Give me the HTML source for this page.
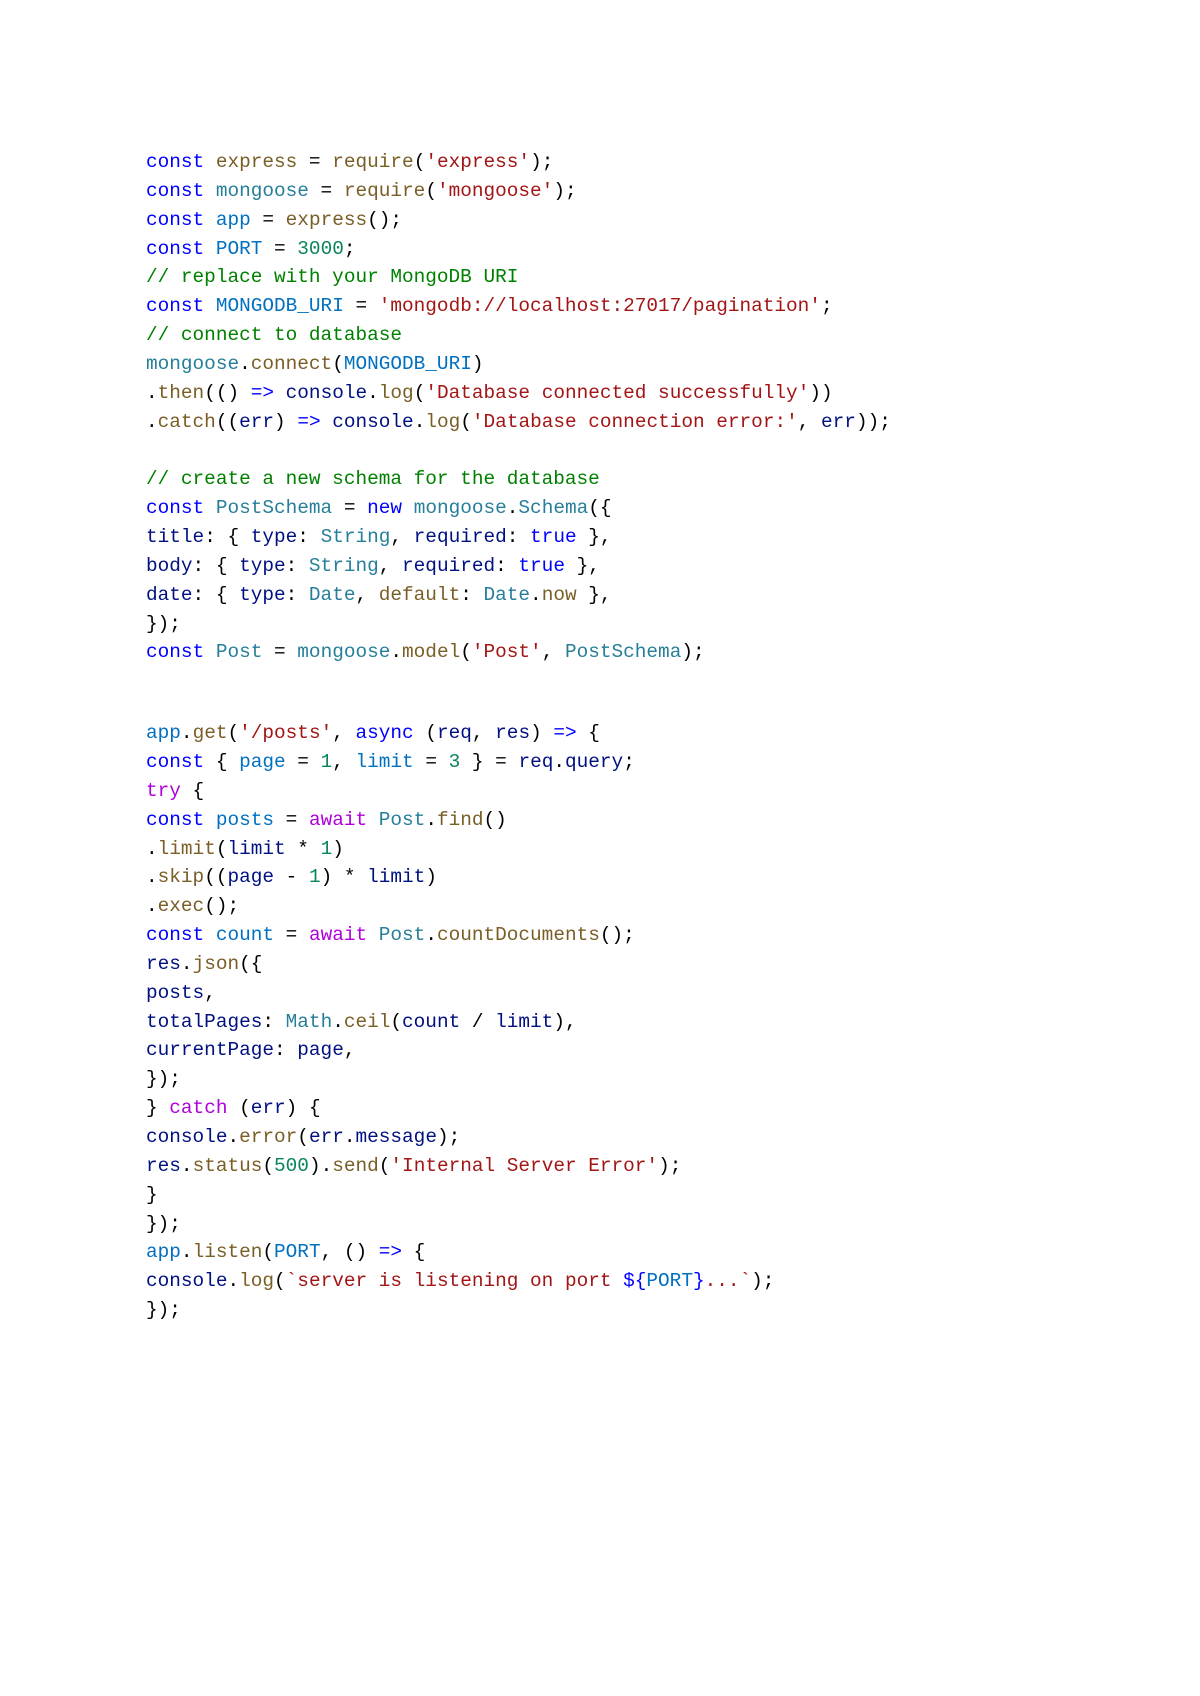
<!DOCTYPE html>
<html><head><meta charset="utf-8"><style>
body{margin:0;background:#fff;width:1200px;height:1696px;overflow:hidden}
pre{position:absolute;left:146px;top:148px;margin:0;font-family:"Liberation Mono",monospace;font-size:19.4px;line-height:28.85px;color:#000;letter-spacing:0}
.g{display:inline-block;height:52px;vertical-align:top}
.k{color:#0000ff}.t{color:#267f99}.v{color:#0070c1}.f{color:#795e26}.s{color:#a31515}.n{color:#098658}.c{color:#008000}.p{color:#af00db}.d{color:#001080}
</style></head><body><pre><span class="k">const</span> <span class="f">express</span> = <span class="f">require</span>(<span class="s">'express'</span>);
<span class="k">const</span> <span class="t">mongoose</span> = <span class="f">require</span>(<span class="s">'mongoose'</span>);
<span class="k">const</span> <span class="v">app</span> = <span class="f">express</span>();
<span class="k">const</span> <span class="v">PORT</span> = <span class="n">3000</span>;
<span class="c">// replace with your MongoDB URI</span>
<span class="k">const</span> <span class="v">MONGODB_URI</span> = <span class="s">'mongodb://localhost:27017/pagination'</span>;
<span class="c">// connect to database</span>
<span class="t">mongoose</span>.<span class="f">connect</span>(<span class="v">MONGODB_URI</span>)
.<span class="f">then</span>(() <span class="k">=&gt;</span> <span class="d">console</span>.<span class="f">log</span>(<span class="s">'Database connected successfully'</span>))
.<span class="f">catch</span>((<span class="d">err</span>) <span class="k">=&gt;</span> <span class="d">console</span>.<span class="f">log</span>(<span class="s">'Database connection error:'</span>, <span class="d">err</span>));

<span class="c">// create a new schema for the database</span>
<span class="k">const</span> <span class="t">PostSchema</span> = <span class="k">new</span> <span class="t">mongoose</span>.<span class="t">Schema</span>({
<span class="d">title</span>: { <span class="d">type</span>: <span class="t">String</span>, <span class="d">required</span>: <span class="k">true</span> },
<span class="d">body</span>: { <span class="d">type</span>: <span class="t">String</span>, <span class="d">required</span>: <span class="k">true</span> },
<span class="d">date</span>: { <span class="d">type</span>: <span class="t">Date</span>, <span class="f">default</span>: <span class="t">Date</span>.<span class="f">now</span> },
});
<span class="k">const</span> <span class="t">Post</span> = <span class="t">mongoose</span>.<span class="f">model</span>(<span class="s">'Post'</span>, <span class="t">PostSchema</span>);
<span class="g"></span>
<span class="v">app</span>.<span class="f">get</span>(<span class="s">'/posts'</span>, <span class="k">async</span> (<span class="d">req</span>, <span class="d">res</span>) <span class="k">=&gt;</span> {
<span class="k">const</span> { <span class="v">page</span> = <span class="n">1</span>, <span class="v">limit</span> = <span class="n">3</span> } = <span class="d">req</span>.<span class="d">query</span>;
<span class="p">try</span> {
<span class="k">const</span> <span class="v">posts</span> = <span class="p">await</span> <span class="t">Post</span>.<span class="f">find</span>()
.<span class="f">limit</span>(<span class="d">limit</span> * <span class="n">1</span>)
.<span class="f">skip</span>((<span class="d">page</span> - <span class="n">1</span>) * <span class="d">limit</span>)
.<span class="f">exec</span>();
<span class="k">const</span> <span class="v">count</span> = <span class="p">await</span> <span class="t">Post</span>.<span class="f">countDocuments</span>();
<span class="d">res</span>.<span class="f">json</span>({
<span class="d">posts</span>,
<span class="d">totalPages</span>: <span class="t">Math</span>.<span class="f">ceil</span>(<span class="d">count</span> / <span class="d">limit</span>),
<span class="d">currentPage</span>: <span class="d">page</span>,
});
} <span class="p">catch</span> (<span class="d">err</span>) {
<span class="d">console</span>.<span class="f">error</span>(<span class="d">err</span>.<span class="d">message</span>);
<span class="d">res</span>.<span class="f">status</span>(<span class="n">500</span>).<span class="f">send</span>(<span class="s">'Internal Server Error'</span>);
}
});
<span class="v">app</span>.<span class="f">listen</span>(<span class="v">PORT</span>, () <span class="k">=&gt;</span> {
<span class="d">console</span>.<span class="f">log</span>(<span class="s">`server is listening on port </span><span class="k">${</span><span class="v">PORT</span><span class="k">}</span><span class="s">...`</span>);
});</pre></body></html>
